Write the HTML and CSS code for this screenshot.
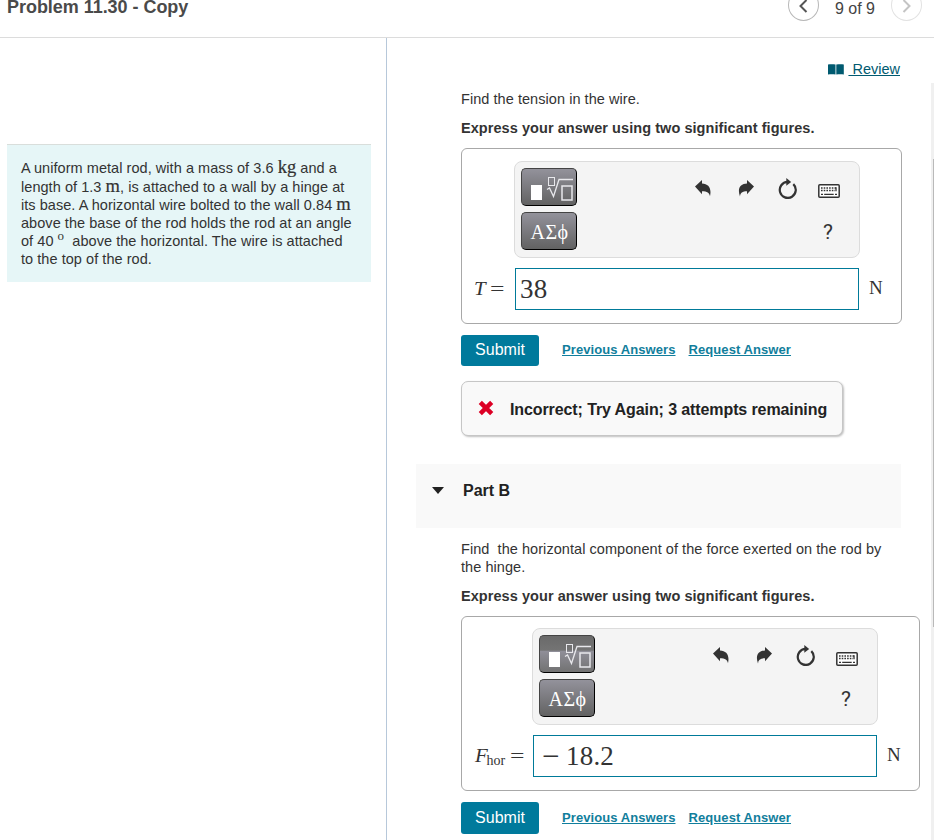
FILE: index.html
```html
<!DOCTYPE html>
<html lang="en">
<head>
<meta charset="utf-8">
<title>Problem 11.30 - Copy</title>
<link rel="stylesheet" href="styles.css">
</head>
<body>
<svg class="defs" width="0" height="0">
  <defs>
    <symbol id="undo" viewBox="0 0 16 17"><path d="M0 6.500L7 0v3.400c6.500.3 9.800 4.500 8 12.900-.4-3.300-2.800-5.100-8-5.100v3z"/></symbol>
    <symbol id="redo" viewBox="0 0 16 17"><path d="M16 6.500L9 0v3.400C2.500 3.700-1 8 2 16.500c.1-3.500 2.500-5.300 7-5.300v3z"/></symbol>
    <symbol id="reset" viewBox="0 0 20 21"><path d="M16.300 6.100A8 8 0 1 1 10.500 3.900" fill="none" stroke="currentColor" stroke-width="2.200"/><path d="M9.300 0l4.900 3.900-4.900 3.900z"/></symbol>
    <symbol id="keyboard" viewBox="0 0 22 14"><rect x=".8" y=".8" width="20.400" height="12.400" rx="1" fill="#fff" stroke="currentColor" stroke-width="1.500"/><path d="M3 4h16M3 6.500h14" fill="none" stroke="currentColor" stroke-width="1.400" stroke-dasharray="1.600 1.100"/><path d="M18 3.300v4M3 10.300h2M6.200 10.300h9.500M17 10.300h2" fill="none" stroke="currentColor" stroke-width="1.300"/></symbol>
    <symbol id="root" viewBox="0 0 56 38"><rect x="10" y="17" width="11" height="15" fill="#fff"/><g fill="none" stroke="#e8e8ec"><rect x="27.500" y="9.500" width="6" height="8"/><path d="M26 21.500l2.500-1.500 4 8.500L38 11.500h14" stroke-width="1.300"/><rect x="41" y="18" width="10" height="14" stroke-width="1.500"/></g></symbol>
  </defs>
</svg>

<header class="top">
  <h1>Problem 11.30 - Copy</h1>
  <nav>
    <span class="circle"><svg width="9" height="14" viewBox="0 0 9 14"><path d="M7.500 1L1.500 7l6 6"/></svg></span>
    <span class="count">9 of 9</span>
    <span class="circle off"><svg width="9" height="14" viewBox="0 0 9 14"><path d="M1.500 1l6 6-6 6"/></svg></span>
  </nav>
</header>

<div class="main">
  <aside>
    <p class="problem">
      <span class="l1">A uniform metal rod, with a mass of 3.6 <i>kg</i> and a</span>
      <span>length of 1.3 <i>m</i>, is attached to a wall by a hinge at</span>
      <span>its base. A horizontal wire bolted to the wall 0.84 <i>m</i></span>
      <span>above the base of the rod holds the rod at an angle</span>
      <span>of 40 <sup>o</sup>&nbsp; above the horizontal. The wire is attached</span>
      <span>to the top of the rod.</span>
    </p>
  </aside>

  <section class="right">
    <div class="review">
      <svg width="16" height="11" viewBox="0 0 16 11"><path d="M0 .5C2.500 0 5 0 7.500.6v9.900C5 10 2.500 10 0 10.500zM8.300.6C11 0 13.500 0 15.800.5v10C13.500 10 11 10 8.300 10.500z"/></svg>
      <a href="#">&nbsp;Review</a>
    </div>
    <div class="scroller">
      <div class="content">
        <p class="text">Find the tension in the wire.</p>
        <p class="express">Express your answer using two significant figures.</p>

        <div class="answer a">
          <div class="tools">
            <div class="keys">
              <span class="key"><svg width="56" height="38"><use href="#root"/></svg></span>
              <span class="key greek">ΑΣϕ</span>
            </div>
            <div class="icons">
              <svg class="undo" width="16" height="17"><use href="#undo"/></svg>
              <svg class="redo" width="16" height="17"><use href="#redo"/></svg>
              <svg class="reset" width="20" height="21"><use href="#reset"/></svg>
              <svg class="board" width="22" height="14"><use href="#keyboard"/></svg>
              <span class="help">?</span>
            </div>
          </div>
          <div class="entry">
            <span class="label"><em>T</em> <span class="eq">=</span></span>
            <span class="field">38</span>
            <span class="unit">N</span>
          </div>
        </div>

        <div class="actions">
          <span class="submit">Submit</span>
          <a class="prev" href="#">Previous Answers</a>
          <a class="req" href="#">Request Answer</a>
        </div>

        <div class="feedback">
          <svg width="16" height="16" viewBox="0 0 16 16"><path d="M2.300 2.300l11.400 11.400M13.700 2.300L2.300 13.700"/></svg>
          <span>Incorrect; Try Again; 3 attempts remaining</span>
        </div>

        <div class="part">
          <svg width="12" height="7" viewBox="0 0 12 7"><path d="M0 0h12L6 7z"/></svg>
          <h2>Part B</h2>
        </div>

        <p class="text two">Find&nbsp; the horizontal component of the force exerted on the rod by<br>the hinge.</p>
        <p class="express">Express your answer using two significant figures.</p>

        <div class="answer b">
          <div class="tools">
            <div class="keys">
              <span class="key hover"><svg width="56" height="38"><use href="#root"/></svg></span>
              <span class="key greek">ΑΣϕ</span>
            </div>
            <div class="icons">
              <svg class="undo" width="16" height="17"><use href="#undo"/></svg>
              <svg class="redo" width="16" height="17"><use href="#redo"/></svg>
              <svg class="reset" width="20" height="21"><use href="#reset"/></svg>
              <svg class="board" width="22" height="14"><use href="#keyboard"/></svg>
              <span class="help">?</span>
            </div>
          </div>
          <div class="entry">
            <span class="label"><em>F</em><sub>hor</sub> <span class="eq">=</span></span>
            <span class="field minus"><span>−</span>18.2</span>
            <span class="unit">N</span>
          </div>
        </div>

        <div class="actions last">
          <span class="submit">Submit</span>
          <a class="prev" href="#">Previous Answers</a>
          <a class="req" href="#">Request Answer</a>
        </div>
      </div>
      <div class="track"><div class="thumb"></div></div>
    </div>
  </section>
</div>
</body>
</html>
```
FILE: styles.css
```css
* { box-sizing: border-box; }
body {
  margin: 0;
  height: 840px;
  overflow: hidden;
  background: #fff;
  color: #333;
  font-family: "Liberation Sans", Arial, sans-serif;
  font-size: 14.5px;
}
h1, h2, p { margin: 0; }
svg { display: block; flex: none; fill: currentColor; }
.defs { position: absolute; }

.top {
  display: flex;
  justify-content: space-between;
  height: 38px;
  border-bottom: 1px solid #dcdcdc;
  padding: 0 12px 0 7px;
}
.top h1 { color: #4a4a4a; font-size: 18px; line-height: 14px; letter-spacing: -.04px; white-space: nowrap; }
.top nav { display: flex; margin-top: -11px; }
.circle {
  display: flex;
  align-items: center;
  justify-content: center;
  width: 31px;
  height: 32px;
  border: 1px solid #b8b8b8;
  border-radius: 50%;
}
.circle svg { fill: none; stroke: #555; stroke-width: 2; margin-top: 2px; }
.circle.off { border-color: #e2e2e2; }
.circle.off svg { stroke: #c4c4c4; }
.count { width: 72px; text-align: center; font-size: 16px; line-height: 40px; color: #444; }

.main { display: grid; grid-template-columns: 387px 1fr; height: 802px; }
aside { border-right: 1px solid #b7c8da; padding: 106px 15px 0 7px; }
.problem {
  height: 138px;
  padding: 14px 0 0 14px;
  background: #e6f6f7;
  border-top: 1px solid #d9dedb;
  letter-spacing: .05px;
  white-space: nowrap;
}
.problem > span { display: block; height: 18px; line-height: 18px; }
.problem > .l1 { height: 19px; }
.problem i { font: 18.500px/10px "Liberation Serif", serif; -webkit-text-stroke: .2px; }
.problem sup { font: 13px/1px "Liberation Serif", serif; }

.right { display: flex; flex-direction: column; min-width: 0; height: 802px; }
.review { display: flex; justify-content: flex-end; height: 45px; padding: 22px 34px 0 0; color: #005a70; }
.review svg { margin: 4px 4px 0 0; }
.review a { color: inherit; line-height: 18px; }
.scroller { display: flex; height: 757px; overflow: hidden; }
.content { width: 544px; padding: 7px 0 0 74px; }
.track { width: 3px; background: #f0f0f0; padding: 76px 0 0 2px; }
.thumb { height: 468px; background: #b9b9b9; }

.text { line-height: 18px; letter-spacing: .055px; white-space: nowrap; }
.express { font-weight: bold; line-height: 18px; letter-spacing: .06px; margin-top: 11px; white-space: nowrap; }

.answer { width: 441px; height: 176px; margin-top: 11px; border: 1px solid #a8a8a8; border-radius: 6px; padding: 12px 0 0 52px; }
.answer.b { width: 459px; height: 175px; padding: 11px 0 0 70px; }
.tools {
  display: flex;
  width: 346px;
  height: 97px;
  padding: 6px;
  background: #f4f4f4;
  border: 1px solid #dcdcdc;
  border-radius: 8px;
}
.keys { display: grid; gap: 6px; align-content: start; }
.key {
  width: 56px;
  height: 38px;
  border: 1px solid #000;
  border-top-color: #444;
  border-left-color: #444;
  border-radius: 5px;
  background: linear-gradient(#93929b, #626262);
  color: #fff;
}
.key svg { margin: -1px; }
.key.hover { background: linear-gradient(#6a6a6a 0, #747474 40%, #908f99 41%, #727272 100%); }
.greek { font: 20px/38px "Liberation Serif", serif; letter-spacing: .4px; padding-left: 1px; text-align: center; }
.icons { display: grid; grid-template-columns: 43px 39px 41px 24px; grid-template-rows: 40px 30px; padding-left: 118px; }
.undo { margin-top: 12px; }
.redo { margin-top: 12px; }
.reset { margin-top: 10px; }
.board { margin-top: 16px; }
.b .board { margin-top: 17px; }
.help { grid-column: 4; font: 21px/48px Roboto, sans-serif; padding-left: 5px; }

.entry { display: flex; align-items: center; height: 42px; margin: 10px 0 0 -52px; font-family: "Liberation Serif", serif; }
.label { width: 53px; padding-left: 12px; font-size: 19px; line-height: 22px; margin-top: -1px; white-space: nowrap; }
.b .entry { margin-left: -70px; }
.b .label { width: 71px; padding-left: 13px; }
.eq { display: inline-block; transform: scaleX(1.35); transform-origin: left; }
.label em { display: inline-block; transform: scaleX(1.1); transform-origin: left; margin-right: 1px; }
.b .label em { margin-right: 0; }
.label sub { font-size: 14px; line-height: 1px; vertical-align: -3px; }
.field { width: 344px; height: 42px; border: 1px solid #007a99; padding-left: 4px; font-size: 27px; line-height: 40px; letter-spacing: .2px; }
.minus { padding-left: 8px; }
.minus > span { display: inline-block; width: 16px; margin-right: 8px; transform: scaleX(1.15); transform-origin: left; }
.unit { padding-left: 10px; font-size: 19px; line-height: 20px; margin-top: -2px; }

.actions { display: flex; height: 31px; margin-top: 11px; font-size: 13px; font-weight: bold; }
.actions a { color: #117e9c; line-height: 29px; letter-spacing: .08px; white-space: nowrap; }
.submit { width: 78px; height: 31px; background: #007a9c; color: #fff; border-radius: 3px; font-size: 16px; font-weight: normal; line-height: 30px; text-align: center; }
.last .submit { height: 32px; line-height: 32px; }
.last a { line-height: 31px; }
.prev { margin-left: 23px; }
.req { margin-left: 13px; }

.feedback {
  display: flex;
  align-items: center;
  width: 382px;
  height: 55px;
  margin-top: 15px;
  padding: 0 0 0 16px;
  background: #f9f9f9;
  border: 1px solid #c6c6c6;
  border-radius: 7px;
  box-shadow: 1px 1px 2px rgba(0, 0, 0, .25);
  color: #222;
  font-size: 16px;
  font-weight: bold;
  letter-spacing: -.1px;
  white-space: nowrap;
}
.feedback svg { fill: none; stroke: #dc0025; stroke-width: 4.500; margin-top: -2px; }
.feedback span { margin: 2px 0 0 16px; }

.part { display: flex; width: 485px; height: 64px; margin: 28px 0 0 -45px; padding: 17px 0 0 16px; background: #f9f9f9; color: #222; }
.part svg { margin-top: 6px; }
.part h2 { margin-left: 19px; font-size: 16px; line-height: 20px; }
.text.two { margin-top: 12px; }
```
